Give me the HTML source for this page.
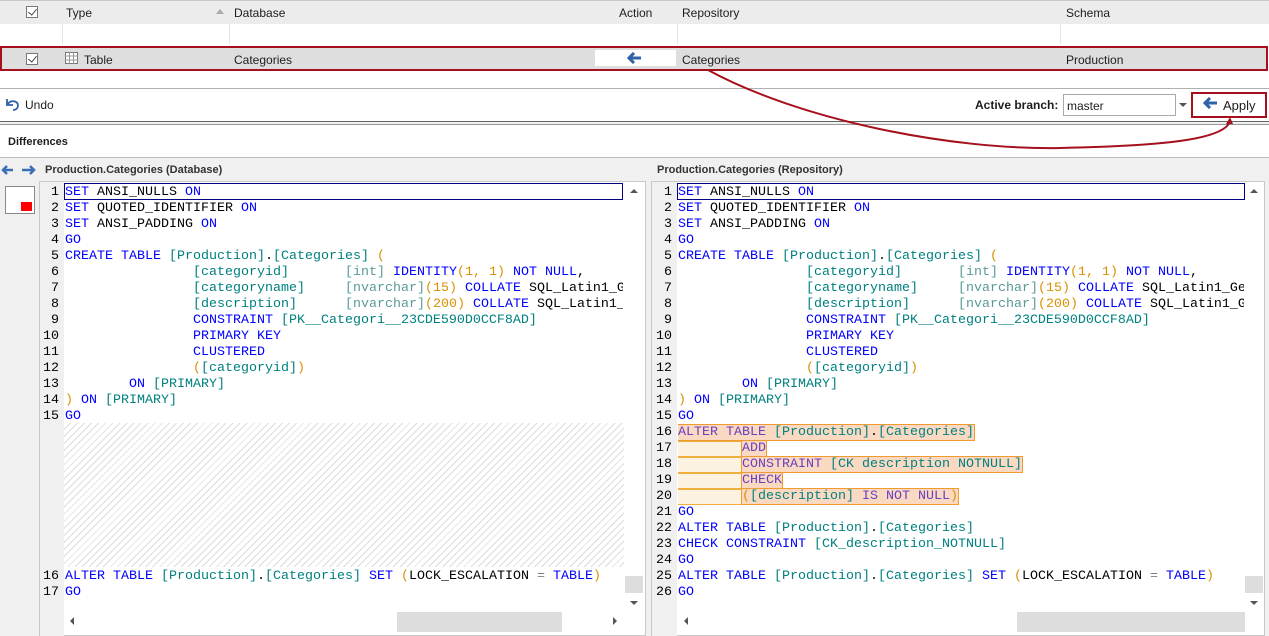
<!DOCTYPE html>
<html><head><meta charset="utf-8"><style>
*{margin:0;padding:0;box-sizing:border-box}
body{width:1269px;height:636px;overflow:hidden;background:#f0f0f0;font-family:"Liberation Sans",sans-serif;font-size:12px;color:#1e1e1e;position:relative}
.a{position:absolute}
.hdr{top:0;left:0;width:1269px;height:24px;background:#ececec;border-top:1px solid #c8c8c8}
.cell{position:absolute;top:6px}
.cb{position:absolute;width:12px;height:12px;border:1px solid #777;background:#fff}
.cb:after{content:"";position:absolute;left:3px;top:0px;width:4px;height:7px;border:solid #444;border-width:0 1.5px 1.5px 0;transform:rotate(40deg)}
.vl{position:absolute;width:1px;background:#e4e4e4}
pre{font-family:"Liberation Mono",monospace;font-size:13.33px;line-height:16px;color:#000}
.k{color:#0000ff}.b{color:#008080}.p{color:#d89000}.t{color:#5a9a9a}.g{color:#808080}.m{color:#6a40c0}
.gut{text-align:right;font-family:"Liberation Mono",monospace;font-size:13.33px;line-height:16px;color:#000}
.hl{background:#fad9c3;outline:1px solid #f09a30}
.cr{display:inline-block;width:64px;height:14px;background:#fbf2e2;outline:1px solid #f0b040;vertical-align:top;margin-top:1px}
</style></head><body>
<div class="a hdr"></div>
<div class="a" style="top:24px;left:0;width:1269px;height:65px;background:#fff;border-bottom:1px solid #b0b0b0"></div>
<div class="cb" style="left:26px;top:6px"></div>
<div class="cell" style="left:66px">Type</div>
<div class="a" style="left:216px;top:9px;width:0;height:0;border-left:4px solid transparent;border-right:4px solid transparent;border-bottom:5px solid #aaa"></div>
<div class="cell" style="left:234px">Database</div>
<div class="cell" style="left:619px">Action</div>
<div class="cell" style="left:682px">Repository</div>
<div class="cell" style="left:1066px">Schema</div>
<div class="vl" style="left:62px;top:24px;height:20px"></div>
<div class="vl" style="left:229px;top:24px;height:20px"></div>
<div class="vl" style="left:677px;top:24px;height:20px"></div>
<div class="vl" style="left:1060px;top:24px;height:20px"></div>
<div class="a" style="left:0;top:46px;width:1268px;height:25px;background:#dedede;border:2px solid #a5101c"></div>
<div class="a" style="left:595px;top:50px;width:81px;height:16px;background:#fff"></div>
<svg class="a" style="left:626px;top:52px" width="16" height="12"><path d="M15 6H4M8 1L3 6l5 5" stroke="#2f62a8" stroke-width="3" fill="none"/></svg>
<div class="cb" style="left:26px;top:53px"></div>
<svg class="a" style="left:65px;top:52px" width="13" height="12"><rect x="0.5" y="0.5" width="12" height="11" fill="#fff" stroke="#777"/><path d="M0 4h13M0 8h13M4.5 0v12M8.5 0v12" stroke="#999"/></svg>
<div class="cell" style="left:84px;top:53px">Table</div>
<div class="cell" style="left:234px;top:53px">Categories</div>
<div class="cell" style="left:682px;top:53px">Categories</div>
<div class="cell" style="left:1066px;top:53px">Production</div>
<div class="a" style="left:0;top:89px;width:1269px;height:32px;background:#fff"></div>
<svg class="a" style="left:4px;top:97px" width="16" height="14"><path d="M3 2v6h6" stroke="#2f62a8" stroke-width="1.8" fill="none"/><path d="M3.5 7.5C6 3 13 3 14 8c0 3-2 5-5 5" stroke="#2f62a8" stroke-width="1.8" fill="none"/></svg>
<div class="a" style="left:25px;top:98px">Undo</div>
<div class="a" style="left:975px;top:98px;font-weight:bold">Active branch:</div>
<div class="a" style="left:1063px;top:94px;width:113px;height:22px;border:1px solid #aaa;background:#fff;padding:4px 3px">master</div>
<div class="a" style="left:1179px;top:103px;border-left:4px solid transparent;border-right:4px solid transparent;border-top:4px solid #555"></div>
<div class="a" style="left:1191px;top:92px;width:76px;height:26px;border:2px solid #a5101c;background:#fff"></div>
<svg class="a" style="left:1202px;top:97px" width="16" height="12"><path d="M15 6H4M8 1L3 6l5 5" stroke="#2f62a8" stroke-width="3" fill="none"/></svg>
<div class="a" style="left:1223px;top:98px;font-size:13px">Apply</div>
<div class="a" style="left:0;top:121px;width:1269px;height:1px;background:#666"></div>
<div class="a" style="left:0;top:124px;width:1269px;height:34px;background:#fff;border-top:1px solid #999;border-bottom:1px solid #bbb"></div>
<div class="a" style="left:8px;top:136px;font-weight:bold;font-size:11px">Differences</div>
<svg class="a" style="left:1px;top:164px" width="36" height="12"><path d="M12 6H3M6 2L2 6l4 4" stroke="#3a6fb5" stroke-width="2.5" fill="none"/><path d="M21 6h11M29 2l4 4-4 4" stroke="#3a6fb5" stroke-width="2.5" fill="none"/></svg>
<div class="a" style="left:45px;top:164px;font-size:11px;font-weight:bold;color:#333">Production.Categories (Database)</div>
<div class="a" style="left:657px;top:164px;font-size:11px;font-weight:bold;color:#333">Production.Categories (Repository)</div>
<div class="a" style="left:5px;top:186px;width:30px;height:28px;border:1px solid #888;background:#fff"></div>
<div class="a" style="left:21px;top:202px;width:11px;height:9px;background:#f00"></div>
<div class="a" style="left:39px;top:181px;width:607px;height:455px;background:#fff;border:1px solid #c8c8c8"></div>
<div class="a" style="left:40px;top:182px;width:24px;height:454px;background:#f0f0f0"></div>
<div class="a" style="left:64px;top:423px;width:560px;height:144px;background:repeating-linear-gradient(135deg,#fff 0 4px,#dcdcdc 4px 5px)"></div>
<div class="a" style="left:64px;top:183px;width:559px;height:17px;border:1px solid #000080"></div>
<div class="a gut" style="left:40px;top:185px;width:19px">1<br>2<br>3<br>4<br>5<br>6<br>7<br>8<br>9<br>10<br>11<br>12<br>13<br>14<br>15</div>
<div class="a gut" style="left:40px;top:569px;width:19px">16<br>17</div>
<div class="a" style="left:65px;top:185px;width:558px;overflow:hidden"><pre><span class="k">SET</span> ANSI_NULLS <span class="k">ON</span>
<span class="k">SET</span> QUOTED_IDENTIFIER <span class="k">ON</span>
<span class="k">SET</span> ANSI_PADDING <span class="k">ON</span>
<span class="k">GO</span>
<span class="k">CREATE</span> <span class="k">TABLE</span> <span class="b">[Production]</span>.<span class="b">[Categories]</span> <span class="p">(</span>
                <span class="b">[categoryid]</span>       <span class="t">[int]</span> <span class="k">IDENTITY</span><span class="p">(1, 1)</span> <span class="k">NOT</span> <span class="k">NULL</span>,
                <span class="b">[categoryname]</span>     <span class="t">[nvarchar]</span><span class="p">(15)</span> <span class="k">COLLATE</span> SQL_Latin1_General
                <span class="b">[description]</span>      <span class="t">[nvarchar]</span><span class="p">(200)</span> <span class="k">COLLATE</span> SQL_Latin1_General
                <span class="k">CONSTRAINT</span> <span class="b">[PK__Categori__23CDE590D0CCF8AD]</span>
                <span class="k">PRIMARY</span> <span class="k">KEY</span>
                <span class="k">CLUSTERED</span>
                <span class="p">(</span><span class="b">[categoryid]</span><span class="p">)</span>
        <span class="k">ON</span> <span class="b">[PRIMARY]</span>
<span class="p">)</span> <span class="k">ON</span> <span class="b">[PRIMARY]</span>
<span class="k">GO</span></pre></div>
<div class="a" style="left:65px;top:569px"><pre><span class="k">ALTER</span> <span class="k">TABLE</span> <span class="b">[Production]</span>.<span class="b">[Categories]</span> <span class="k">SET</span> <span class="p">(</span>LOCK_ESCALATION <span class="g">=</span> <span class="k">TABLE</span><span class="p">)</span>
<span class="k">GO</span></pre></div>
<div class="a" style="left:625px;top:182px;width:18px;height:430px;background:#fff"></div>
<div class="a" style="left:630px;top:189px;border-left:4px solid transparent;border-right:4px solid transparent;border-bottom:4px solid #555"></div>
<div class="a" style="left:625px;top:576px;width:18px;height:17px;background:#ddd"></div>
<div class="a" style="left:630px;top:601px;border-left:4px solid transparent;border-right:4px solid transparent;border-top:4px solid #555"></div>
<div class="a" style="left:397px;top:612px;width:165px;height:20px;background:#ddd"></div>
<div class="a" style="left:70px;top:617px;border-top:4px solid transparent;border-bottom:4px solid transparent;border-right:4px solid #555"></div>
<div class="a" style="left:613px;top:617px;border-top:4px solid transparent;border-bottom:4px solid transparent;border-left:4px solid #555"></div>
<div class="a" style="left:651px;top:181px;width:614px;height:455px;background:#fff;border:1px solid #c8c8c8"></div>
<div class="a" style="left:652px;top:182px;width:25px;height:454px;background:#f0f0f0"></div>
<div class="a" style="left:677px;top:183px;width:568px;height:17px;border:1px solid #000080"></div>
<div class="a gut" style="left:652px;top:185px;width:20px">1<br>2<br>3<br>4<br>5<br>6<br>7<br>8<br>9<br>10<br>11<br>12<br>13<br>14<br>15<br>16<br>17<br>18<br>19<br>20<br>21<br>22<br>23<br>24<br>25<br>26</div>
<div class="a" style="left:678px;top:185px;width:566px;overflow:hidden"><pre><span class="k">SET</span> ANSI_NULLS <span class="k">ON</span>
<span class="k">SET</span> QUOTED_IDENTIFIER <span class="k">ON</span>
<span class="k">SET</span> ANSI_PADDING <span class="k">ON</span>
<span class="k">GO</span>
<span class="k">CREATE</span> <span class="k">TABLE</span> <span class="b">[Production]</span>.<span class="b">[Categories]</span> <span class="p">(</span>
                <span class="b">[categoryid]</span>       <span class="t">[int]</span> <span class="k">IDENTITY</span><span class="p">(1, 1)</span> <span class="k">NOT</span> <span class="k">NULL</span>,
                <span class="b">[categoryname]</span>     <span class="t">[nvarchar]</span><span class="p">(15)</span> <span class="k">COLLATE</span> SQL_Latin1_General
                <span class="b">[description]</span>      <span class="t">[nvarchar]</span><span class="p">(200)</span> <span class="k">COLLATE</span> SQL_Latin1_General
                <span class="k">CONSTRAINT</span> <span class="b">[PK__Categori__23CDE590D0CCF8AD]</span>
                <span class="k">PRIMARY</span> <span class="k">KEY</span>
                <span class="k">CLUSTERED</span>
                <span class="p">(</span><span class="b">[categoryid]</span><span class="p">)</span>
        <span class="k">ON</span> <span class="b">[PRIMARY]</span>
<span class="p">)</span> <span class="k">ON</span> <span class="b">[PRIMARY]</span>
<span class="k">GO</span>
<span class="hl"><span class="m">ALTER</span> <span class="m">TABLE</span> <span class="b">[Production]</span>.<span class="b">[Categories]</span></span>
<span class="cr"></span><span class="hl"><span class="m">ADD</span></span>
<span class="cr"></span><span class="hl"><span class="m">CONSTRAINT</span> <span class="b">[CK description NOTNULL]</span></span>
<span class="cr"></span><span class="hl"><span class="m">CHECK</span></span>
<span class="cr"></span><span class="hl"><span class="p">(</span><span class="b">[description]</span> <span class="m">IS</span> <span class="m">NOT</span> <span class="m">NULL</span><span class="p">)</span></span>
<span class="k">GO</span>
<span class="k">ALTER</span> <span class="k">TABLE</span> <span class="b">[Production]</span>.<span class="b">[Categories]</span>
<span class="k">CHECK</span> <span class="k">CONSTRAINT</span> <span class="b">[CK_description_NOTNULL]</span>
<span class="k">GO</span>
<span class="k">ALTER</span> <span class="k">TABLE</span> <span class="b">[Production]</span>.<span class="b">[Categories]</span> <span class="k">SET</span> <span class="p">(</span>LOCK_ESCALATION <span class="g">=</span> <span class="k">TABLE</span><span class="p">)</span>
<span class="k">GO</span></pre></div>
<div class="a" style="left:1245px;top:182px;width:18px;height:430px;background:#fff"></div>
<div class="a" style="left:1250px;top:189px;border-left:4px solid transparent;border-right:4px solid transparent;border-bottom:4px solid #555"></div>
<div class="a" style="left:1245px;top:576px;width:18px;height:17px;background:#ddd"></div>
<div class="a" style="left:1250px;top:601px;border-left:4px solid transparent;border-right:4px solid transparent;border-top:4px solid #555"></div>
<div class="a" style="left:1017px;top:612px;width:228px;height:20px;background:#ddd"></div>
<div class="a" style="left:684px;top:617px;border-top:4px solid transparent;border-bottom:4px solid transparent;border-right:4px solid #555"></div>
<svg class="a" style="left:0;top:0" width="1269" height="636"><path d="M708 70C800 120 950 150 1060 148C1160 146 1225 140 1230 121" stroke="#a5101c" stroke-width="2" fill="none"/><path d="M1230 117l-4 7h7z" fill="#a5101c"/></svg>
</body></html>
